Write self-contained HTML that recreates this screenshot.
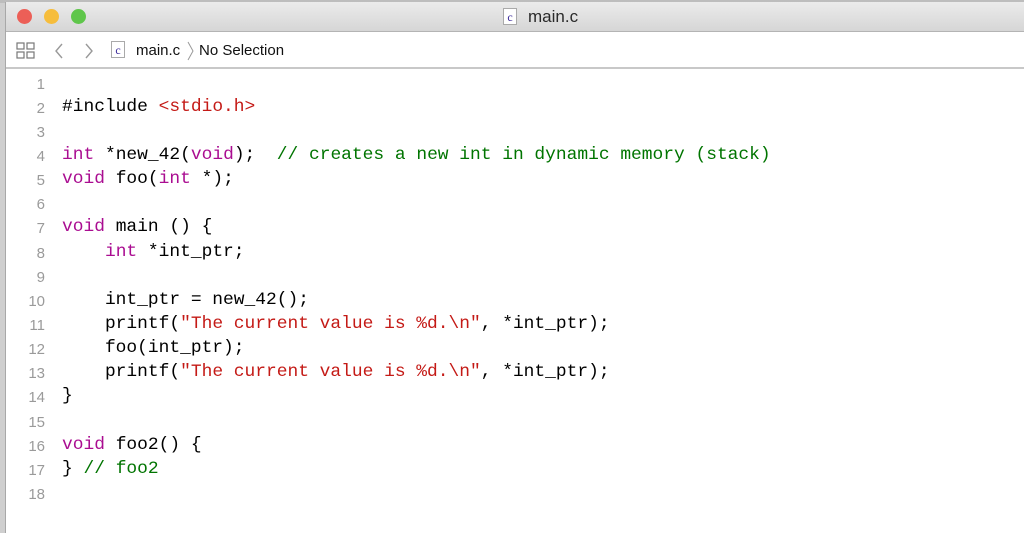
<!DOCTYPE html>
<html><head><meta charset="utf-8"><style>
*{margin:0;padding:0;box-sizing:border-box}
body{width:1024px;height:533px;overflow:hidden;background:#cfcfcf;position:relative;font-family:"Liberation Sans",sans-serif}
.top{position:absolute;left:0;top:0;width:1024px;height:3px;background:#bdbdbd}
.win{position:absolute;left:5px;top:2px;width:1019px;height:531px;background:#fff;border-left:1px solid #a8a8a8}
.title{position:absolute;left:0;top:0;width:100%;height:30px;background:linear-gradient(#ebebeb,#d6d6d6);border-bottom:1px solid #b4b4b4}
.dot{position:absolute;top:7px;width:15px;height:15px;border-radius:50%}
.ttl{position:absolute;left:522px;top:5px;font-size:17px;color:#2a2a2a}
.ficon{position:absolute;width:14px;height:17px;background:#fff;border:1px solid #aaa;font-family:"Liberation Serif",serif;font-size:12px;color:#3b2a9a;text-align:center;line-height:17px}
.tb{position:absolute;left:0;top:31px;width:100%;height:36px;background:#fff;border-bottom:2px solid #c8c8c8}
.tb .t{position:absolute;top:9px;font-size:15px;color:#111}
.code{position:absolute;left:0;top:0}
.ln{position:absolute;width:40px;text-align:right;font-family:"Liberation Sans",sans-serif;font-size:15px;color:#9a9a9a}
.cl{position:absolute;left:56px;font-family:"Liberation Mono",monospace;font-size:17.9px;color:#000;white-space:pre}
.k{color:#aa0d91}.s{color:#c41a16}.c{color:#007400}
</style></head><body>
<div class="top"></div>
<div class="win">
 <div class="title">
  <div class="dot" style="left:11px;background:#ec5f57"></div>
  <div class="dot" style="left:38px;background:#f6bd3c"></div>
  <div class="dot" style="left:65px;background:#5fc64b"></div>
  <div class="ficon" style="left:497px;top:6px">c</div>
  <div class="ttl">main.c</div>
 </div>
 <div class="tb">
  <svg style="position:absolute;left:10px;top:9px" width="20" height="18" viewBox="0 0 20 18" fill="none" stroke="#777" stroke-width="1.2"><rect x="1" y="1" width="7" height="6"/><rect x="11" y="1" width="7" height="6"/><rect x="1" y="10" width="7" height="6"/><rect x="11" y="10" width="7" height="6"/></svg>
  <svg style="position:absolute;left:47px;top:9px" width="12" height="18" fill="none" stroke="#999" stroke-width="1.4"><path d="M9 2L3 9l6 7"/></svg>
  <svg style="position:absolute;left:77px;top:9px" width="12" height="18" fill="none" stroke="#999" stroke-width="1.4"><path d="M3 2l6 7-6 7"/></svg>
  <div class="ficon" style="left:105px;top:8px">c</div>
  <div class="t" style="left:130px">main.c</div>
  <svg style="position:absolute;left:181px;top:8px" width="8" height="20" fill="none" stroke="#999" stroke-width="1"><path d="M1 1l5 9-5 9"/></svg>
  <div class="t" style="left:193px">No Selection</div>
 </div>
</div>
<div class="code" id="c"></div>
<script>
var L=["",
'#include <span class="s">&lt;stdio.h&gt;</span>',
"",
'<span class="k">int</span> *new_42(<span class="k">void</span>);  <span class="c">// creates a new int in dynamic memory (stack)</span>',
'<span class="k">void</span> foo(<span class="k">int</span> *);',
"",
'<span class="k">void</span> main () {',
'    <span class="k">int</span> *int_ptr;',
"",
'    int_ptr = new_42();',
'    printf(<span class="s">"The current value is %d.\\n"</span>, *int_ptr);',
'    foo(int_ptr);',
'    printf(<span class="s">"The current value is %d.\\n"</span>, *int_ptr);',
'}',
"",
'<span class="k">void</span> foo2() {',
'} <span class="c">// foo2</span>',
""];
var h="";
for(var i=0;i<18;i++){var y=84.6+i*24.14;
h+='<div class="ln" style="left:5px;top:'+(y-9)+'px">'+(i+1)+'</div>';
h+='<div class="cl" style="left:62px;top:'+(y-12)+'px">'+L[i]+'</div>';}
document.getElementById('c').innerHTML=h;
</script>
</body></html>
